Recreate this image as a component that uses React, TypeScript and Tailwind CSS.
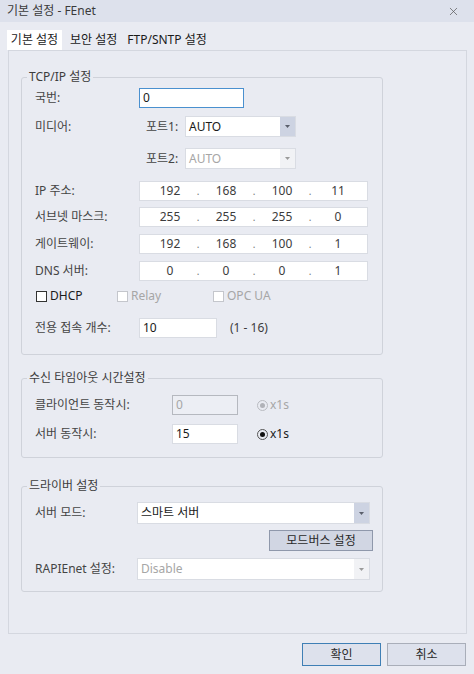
import { X } from "lucide-react";

const FONT = "font-['Noto_Sans','Noto_Sans_CJK_KR',sans-serif]";

function Label({ children, w = "w-[104px]", dim = false }: { children: React.ReactNode; w?: string; dim?: boolean }) {
  return <span className={`${w} shrink-0 ${dim ? "text-[#a6a6a6]" : "text-[#444]"}`}>{children}</span>;
}

function Input({ value, w, focused = false, disabled = false }: { value: string; w: string; focused?: boolean; disabled?: boolean }) {
  const border = focused ? "border-[#4a90cf]" : disabled ? "border-[#b5b8bf]" : "border-[#d9dce3]";
  const bg = disabled ? "bg-[#eceef4]" : "bg-white";
  return (
    <div className={`${w} h-[20px] border ${border} ${bg} flex items-center px-[3px] ${disabled ? "text-[#a6a6a6]" : "text-[#1a1a1a]"}`}>
      {value}
    </div>
  );
}

function Select({ value, w, disabled = false }: { value: string; w: string; disabled?: boolean }) {
  return (
    <div className={`${w} h-[21px] border border-[#d9dce3] bg-white flex items-stretch`}>
      <span className={`flex-1 flex items-center px-[3px] ${disabled ? "text-[#a6a6a6]" : "text-[#1a1a1a]"}`}>{value}</span>
      <span className={`w-[15px] flex items-center justify-center ${disabled ? "bg-[#f1f2f5]" : "bg-[#cdd3e2]"}`}>
        <svg width="5" height="3" viewBox="0 0 5 3">
          <path d="M0 0h5L2.5 3z" fill={disabled ? "#9a9a9a" : "#5a5f6b"} />
        </svg>
      </span>
    </div>
  );
}

function IpBox({ parts }: { parts: string[] }) {
  return (
    <div className="w-[229px] h-[20px] border border-[#d9dce3] bg-white flex items-center pl-[5px] text-[#3c3c3c]">
      {parts.map((p, i) => (
        <div key={i} className="flex items-center">
          <span className="w-[50px] text-center">{p}</span>
          {i < 3 && <span className="w-[6px] text-center text-[10px] text-[#777]">.</span>}
        </div>
      ))}
    </div>
  );
}

function Check({ label, disabled = false }: { label: string; disabled?: boolean }) {
  return (
    <div className={`flex items-center gap-[1px] ${disabled ? "text-[#a6a6a6]" : "text-[#1a1a1a]"}`}>
      <span className={`w-[11px] h-[11px] border bg-white ${disabled ? "border-[#c4c6cc]" : "border-[#333]"}`} />
      <span className="ml-[2px]">{label}</span>
    </div>
  );
}

function Radio({ disabled = false }: { disabled?: boolean }) {
  return (
    <div className={`flex items-center gap-[2px] ${disabled ? "text-[#a6a6a6]" : "text-[#1a1a1a]"}`}>
      <span className={`w-[11px] h-[11px] rounded-full border flex items-center justify-center ${disabled ? "border-[#b9bbc1]" : "border-[#555]"}`}>
        <span className={`w-[5px] h-[5px] rounded-full ${disabled ? "bg-[#b0b2b8]" : "bg-[#111]"}`} />
      </span>
      <span>x1s</span>
    </div>
  );
}

function Group({ title, className, children }: { title: string; className: string; children: React.ReactNode }) {
  return (
    <div className={`relative w-[362px] border border-[#cfd2da] rounded-[3px] pl-[13px] ${className}`}>
      <span className="absolute left-[5px] top-[-10px] px-[2px] bg-[#e9ebf2] text-[#3c3c3c] leading-[18px]">{title}</span>
      {children}
    </div>
  );
}

export default function App() {
  return (
    <div className={`w-[474px] h-[674px] bg-[#e9ebf2] flex flex-col text-[12px] ${FONT}`}>
      {/* Title bar */}
      <div className="h-[22px] bg-[#dde1ec] flex items-center justify-between pl-[7px] pr-[14px] text-[#3a3a3a]">
        <span>기본 설정 - FEnet</span>
        <X size={13} strokeWidth={1.3} className="text-[#555]" />
      </div>

      {/* Tabs */}
      <div className="mt-[8px] ml-[7px] h-[20px] flex items-center text-[#1a1a1a]">
        <span className="h-[20px] w-[55px] bg-white flex items-center justify-center">기본 설정</span>
        <span className="ml-[8px]">보안 설정</span>
        <span className="ml-[10px]">FTP/SNTP 설정</span>
      </div>

      {/* Panel */}
      <div className="ml-[8px] w-[459px] h-[584px] border border-[#d4d7df] pl-[12px] flex flex-col">
        <Group title="TCP/IP 설정" className="mt-[26px] h-[278px] pt-[10px]">
          <div className="flex items-center h-[20px]">
            <Label>국번:</Label>
            <Input value="0" w="w-[105px]" focused />
          </div>
          <div className="flex items-center h-[21px] mt-[8px]">
            <Label w="w-[111px]">미디어:</Label>
            <span className="w-[39px] text-[#444]">포트1:</span>
            <Select value="AUTO" w="w-[111px]" />
          </div>
          <div className="flex items-center h-[21px] mt-[11px]">
            <span className="ml-[111px] w-[39px] text-[#444]">포트2:</span>
            <Select value="AUTO" w="w-[111px]" disabled />
          </div>
          <div className="flex items-center mt-[12px]">
            <Label>IP 주소:</Label>
            <IpBox parts={["192", "168", "100", "11"]} />
          </div>
          <div className="flex items-center mt-[6px]">
            <Label>서브넷 마스크:</Label>
            <IpBox parts={["255", "255", "255", "0"]} />
          </div>
          <div className="flex items-center mt-[7px]">
            <Label>게이트웨이:</Label>
            <IpBox parts={["192", "168", "100", "1"]} />
          </div>
          <div className="flex items-center mt-[7px]">
            <Label>DNS 서버:</Label>
            <IpBox parts={["0", "0", "0", "1"]} />
          </div>
          <div className="flex items-center h-[14px] mt-[8px] pl-[1px]">
            <div className="w-[81px]"><Check label="DHCP" /></div>
            <div className="w-[96px]"><Check label="Relay" disabled /></div>
            <Check label="OPC UA" disabled />
          </div>
          <div className="flex items-center mt-[15px]">
            <Label>전용 접속 개수:</Label>
            <Input value="10" w="w-[78px]" />
            <span className="ml-[13px] text-[#3c3c3c]">(1 - 16)</span>
          </div>
        </Group>

        <Group title="수신 타임아웃 시간설정" className="mt-[23px] h-[80px] pt-[16px]">
          <div className="flex items-center">
            <Label w="w-[137px]">클라이언트 동작시:</Label>
            <Input value="0" w="w-[66px]" disabled />
            <span className="ml-[19px]"><Radio disabled /></span>
          </div>
          <div className="flex items-center mt-[9px]">
            <Label w="w-[137px]">서버 동작시:</Label>
            <Input value="15" w="w-[66px]" />
            <span className="ml-[19px]"><Radio /></span>
          </div>
        </Group>

        <Group title="드라이버 설정" className="mt-[28px] h-[106px] pt-[15px]">
          <div className="flex items-center">
            <Label w="w-[102px]">서버 모드:</Label>
            <Select value="스마트 서버" w="w-[233px] h-[22px]" />
          </div>
          <div className="flex justify-end pr-[9px] mt-[6px]">
            <button className="w-[104px] h-[21px] bg-[#d1d6e3] border border-[#8f98ab] text-[#2a2a2a]">모드버스 설정</button>
          </div>
          <div className="flex items-center mt-[7px]">
            <Label w="w-[102px]">RAPIEnet 설정:</Label>
            <Select value="Disable" w="w-[233px] h-[22px]" disabled />
          </div>
        </Group>
      </div>

      {/* Buttons */}
      <div className="mt-[9px] flex justify-end gap-[6px] pr-[8px]">
        <button className="w-[79px] h-[23px] bg-[#dde1ec] border border-[#3f7fb5] text-[#2a2a2a]">확인</button>
        <button className="w-[79px] h-[23px] bg-[#dde1ec] border border-[#a9aeb9] text-[#2a2a2a]">취소</button>
      </div>
    </div>
  );
}
